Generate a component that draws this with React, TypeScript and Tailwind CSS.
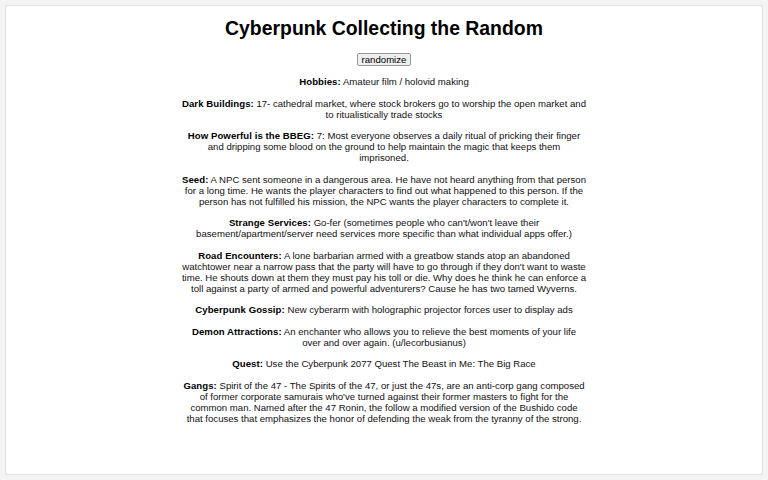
const entries: { label: string; text: string }[] = [
  { label: "Hobbies:", text: "Amateur film / holovid making" },
  {
    label: "Dark Buildings:",
    text: "17- cathedral market, where stock brokers go to worship the open market and to ritualistically trade stocks",
  },
  {
    label: "How Powerful is the BBEG:",
    text: "7: Most everyone observes a daily ritual of pricking their finger and dripping some blood on the ground to help maintain the magic that keeps them imprisoned.",
  },
  {
    label: "Seed:",
    text: "A NPC sent someone in a dangerous area. He have not heard anything from that person for a long time. He wants the player characters to find out what happened to this person. If the person has not fulfilled his mission, the NPC wants the player characters to complete it.",
  },
  {
    label: "Strange Services:",
    text: "Go-fer (sometimes people who can't/won't leave their basement/apartment/server need services more specific than what individual apps offer.)",
  },
  {
    label: "Road Encounters:",
    text: "A lone barbarian armed with a greatbow stands atop an abandoned watchtower near a narrow pass that the party will have to go through if they don't want to waste time. He shouts down at them they must pay his toll or die. Why does he think he can enforce a toll against a party of armed and powerful adventurers? Cause he has two tamed Wyverns.",
  },
  {
    label: "Cyberpunk Gossip:",
    text: "New cyberarm with holographic projector forces user to display ads",
  },
  {
    label: "Demon Attractions:",
    text: "An enchanter who allows you to relieve the best moments of your life over and over again. (u/lecorbusianus)",
  },
  {
    label: "Quest:",
    text: "Use the Cyberpunk 2077 Quest The Beast in Me: The Big Race",
  },
  {
    label: "Gangs:",
    text: "Spirit of the 47 - The Spirits of the 47, or just the 47s, are an anti-corp gang composed of former corporate samurais who've turned against their former masters to fight for the common man. Named after the 47 Ronin, the follow a modified version of the Bushido code that focuses that emphasizes the honor of defending the weak from the tyranny of the strong.",
  },
];

export default function App() {
  return (
    <div className="min-h-screen bg-[#f3f3f3] p-[5px] font-['Liberation_Sans',Arial,sans-serif] text-[#111]">
      <div className="h-[470px] bg-white border border-[#e2e2e2] text-center">
        <h1 className="mt-[10px] text-[19.4px] font-bold leading-[24px] text-black">
          Cyberpunk Collecting the Random
        </h1>
        <button className="mt-[13px] px-[4px] h-[13px] text-[9.6px] leading-[11px] bg-[#efefef] border border-[#999] rounded-[2px] text-black">
          randomize
        </button>
        <div className="mx-auto mt-[6px] w-[404.5px]">
          {entries.map((e) => (
            <p key={e.label} className="text-[9.6px] leading-[11px] mb-[10.5px]">
              <b className="font-bold tracking-[0.06px] text-black">{e.label}</b> {e.text}
            </p>
          ))}
        </div>
      </div>
    </div>
  );
}
